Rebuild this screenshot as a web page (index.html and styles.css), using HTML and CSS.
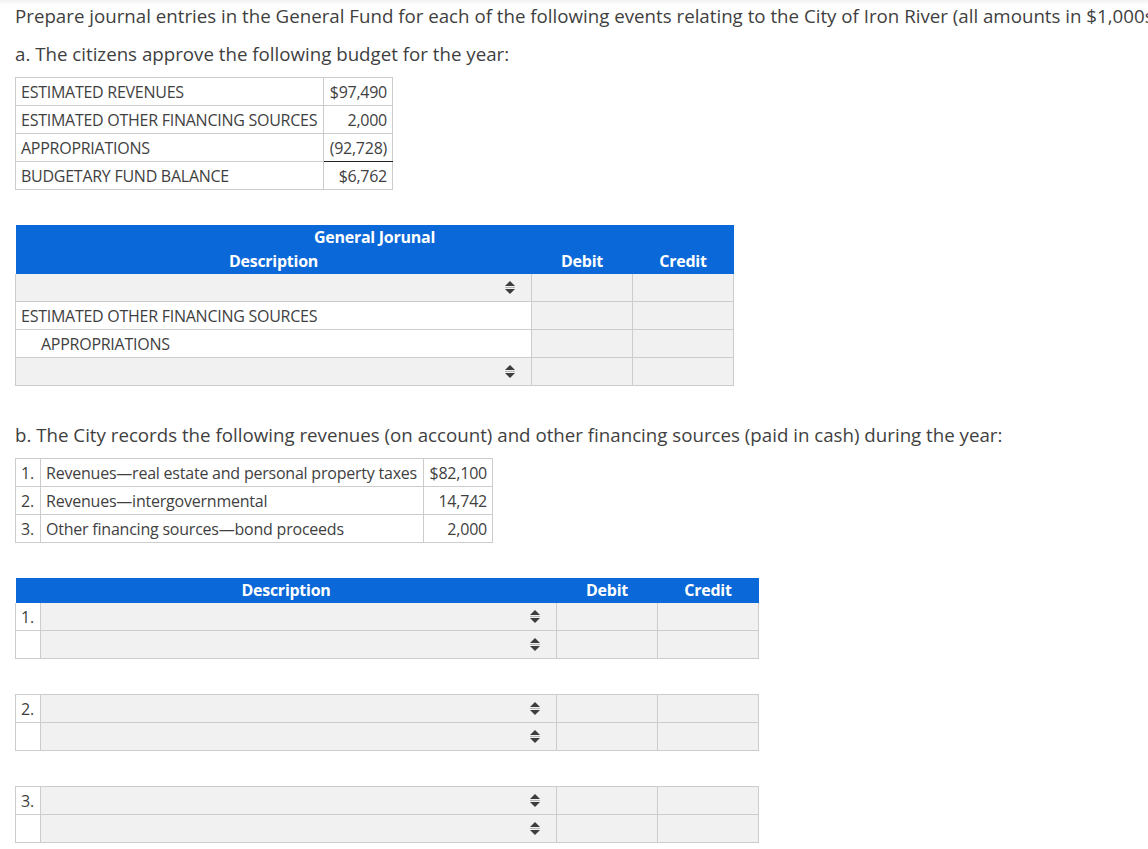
FILE: index.html
```html
<!DOCTYPE html>
<html lang="en">
<head>
<meta charset="utf-8">
<title>Journal entries</title>
<link rel="stylesheet" href="styles.css">
</head>
<body>
<svg class="defs" width="0" height="0" aria-hidden="true"><symbol id="sel" viewBox="0 0 10 13"><path d="M5 0 10 5H0Z" fill="#3d3d3d"/><path d="M0 6H10V7H0Z" fill="#b5b5b5"/><path d="M0 8H10L5 13Z" fill="#3d3d3d"/></symbol></svg>
<main class="page">
  <p class="intro">Prepare journal entries in the General Fund for each of the following events relating to the City of Iron River (all amounts in $1,000s).</p>
  <p class="lead lead-a">a. The citizens approve the following budget for the year:</p>
  <table class="grid budget">
    <colgroup><col class="c-308"><col class="c-69"></colgroup>
    <tr><td>ESTIMATED REVENUES</td><td class="num">$97,490</td></tr>
    <tr><td>ESTIMATED OTHER FINANCING SOURCES</td><td class="num">2,000</td></tr>
    <tr><td>APPROPRIATIONS</td><td class="num rule">(92,728)</td></tr>
    <tr><td>BUDGETARY FUND BALANCE</td><td class="num">$6,762</td></tr>
  </table>

  <table class="grid journal journal-a">
    <colgroup><col class="c-516"><col class="c-101"><col class="c-101"></colgroup>
    <tr class="head head-top"><th colspan="3"><span class="title">General Jorunal</span></th></tr>
    <tr class="head head-sub"><th>Description</th><th>Debit</th><th>Credit</th></tr>
    <tr><td class="in sel"><svg class="arrows"><use href="#sel"/></svg></td><td class="in"></td><td class="in"></td></tr>
    <tr><td>ESTIMATED OTHER FINANCING SOURCES</td><td class="in"></td><td class="in"></td></tr>
    <tr><td class="indent">APPROPRIATIONS</td><td class="in"></td><td class="in"></td></tr>
    <tr><td class="in sel"><svg class="arrows"><use href="#sel"/></svg></td><td class="in"></td><td class="in"></td></tr>
  </table>

  <p class="lead lead-b">b. The City records the following revenues (on account) and other financing sources (paid in cash) during the year:</p>
  <table class="grid events">
    <colgroup><col class="c-25"><col class="c-383"><col class="c-69"></colgroup>
    <tr><td class="idx">1.</td><td>Revenues—real estate and personal property taxes</td><td class="num">$82,100</td></tr>
    <tr><td class="idx">2.</td><td>Revenues—intergovernmental</td><td class="num">14,742</td></tr>
    <tr><td class="idx">3.</td><td>Other financing sources—bond proceeds</td><td class="num">2,000</td></tr>
  </table>

  <table class="grid journal journal-b">
    <colgroup><col class="c-25"><col class="c-516"><col class="c-101"><col class="c-101"></colgroup>
    <tr class="head head-sub"><th colspan="2">Description</th><th>Debit</th><th>Credit</th></tr>
    <tr><td class="idx">1.</td><td class="in sel"><svg class="arrows"><use href="#sel"/></svg></td><td class="in"></td><td class="in"></td></tr>
    <tr><td></td><td class="in sel"><svg class="arrows"><use href="#sel"/></svg></td><td class="in"></td><td class="in"></td></tr>
  </table>
  <table class="grid journal journal-c">
    <colgroup><col class="c-25"><col class="c-516"><col class="c-101"><col class="c-101"></colgroup>
    <tr><td class="idx">2.</td><td class="in sel"><svg class="arrows"><use href="#sel"/></svg></td><td class="in"></td><td class="in"></td></tr>
    <tr><td></td><td class="in sel"><svg class="arrows"><use href="#sel"/></svg></td><td class="in"></td><td class="in"></td></tr>
  </table>
  <table class="grid journal journal-c">
    <colgroup><col class="c-25"><col class="c-516"><col class="c-101"><col class="c-101"></colgroup>
    <tr><td class="idx">3.</td><td class="in sel"><svg class="arrows"><use href="#sel"/></svg></td><td class="in"></td><td class="in"></td></tr>
    <tr><td></td><td class="in sel"><svg class="arrows"><use href="#sel"/></svg></td><td class="in"></td><td class="in"></td></tr>
  </table>
</main>
</body>
</html>
```
FILE: styles.css
```css
html, body { margin: 0; padding: 0; }
body { overflow: hidden; height: 849px; font-family: "Open Sans", "Noto Sans", sans-serif; color: #3f3f3f; background: linear-gradient(#f2f2f2, #fff 5px); }
.defs { position: absolute; }
.page { padding: 0 0 0 15px; }
p { margin: 0; font-size: 18.72px; line-height: 24px; white-space: nowrap; }
.intro { padding-top: 4px; }
.lead-a { margin-top: 14px; }
.lead-b { margin-top: 37px; }

.grid { border-collapse: collapse; table-layout: fixed; font-size: 16px; letter-spacing: -0.26px; background: #fff; }
.grid td, .grid th { height: 27px; padding: 0 5px; border: 1px solid #ccc; box-sizing: content-box; line-height: 22px; white-space: nowrap; }
.c-25 { width: 25px; } .c-69 { width: 69px; } .c-101 { width: 101px; }
.c-308 { width: 308px; } .c-383 { width: 383px; } .c-516 { width: 516px; }

.budget { width: 377px; margin-top: 11px; }
.events { width: 477px; margin-top: 11px; letter-spacing: -0.22px; }
.grid .num { text-align: right; }
.grid .rule { border-bottom-color: #222; }
.grid .indent { padding-left: 25px; }

.journal-a { width: 718px; margin-top: 35px; }
.journal-b { width: 743px; margin-top: 35px; }
.journal-c { width: 743px; margin-top: 35px; }
.grid .head th { background: #0a68d8; color: #fff; font-weight: 700; border: 0; text-align: center; height: 24px; padding: 0; }
.grid .head + tr:not(.head) td { border-top: 0; height: 27px; }
.grid .head-sub th { height: 24px; padding-bottom: 1px; }
.grid .head-top th { height: 24px; }
.title { display: block; line-height: 24px; }
.in { background: #f1f1f1; }
.grid .sel { padding-right: 16px; }
.arrows { display: block; width: 10px; height: 13px; margin-left: auto; }
```
